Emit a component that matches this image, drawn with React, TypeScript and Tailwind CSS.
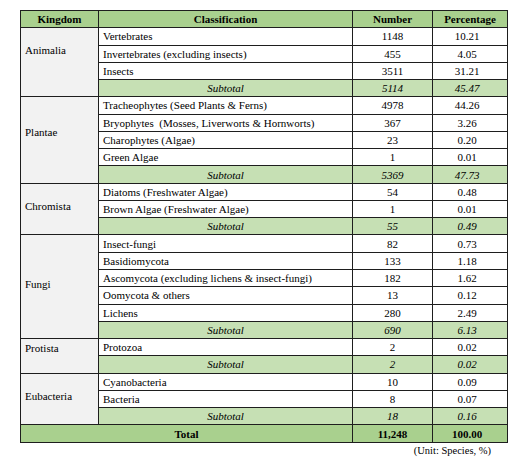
import React from 'react';

type Item = { name: string; number: string; percent: string };

type Kingdom = {
    name: string;
    // pushes the kingdom label down to where it sits in the original sheet
    labelPad: string;
    items: Item[];
    subtotal: { number: string; percent: string };
};

const kingdoms: Kingdom[] = [
    {
        name: 'Animalia',
        labelPad: 'pt-[14px]',
        items: [
            { name: 'Vertebrates', number: '1148', percent: '10.21' },
            { name: 'Invertebrates (excluding insects)', number: '455', percent: '4.05' },
            { name: 'Insects', number: '3511', percent: '31.21' },
        ],
        subtotal: { number: '5114', percent: '45.47' },
    },
    {
        name: 'Plantae',
        labelPad: 'pt-[27px]',
        items: [
            { name: 'Tracheophytes (Seed Plants & Ferns)', number: '4978', percent: '44.26' },
            { name: 'Bryophytes  (Mosses, Liverworts & Hornworts)', number: '367', percent: '3.26' },
            { name: 'Charophytes (Algae)', number: '23', percent: '0.20' },
            { name: 'Green Algae', number: '1', percent: '0.01' },
        ],
        subtotal: { number: '5369', percent: '47.73' },
    },
    {
        name: 'Chromista',
        labelPad: 'pt-[14px]',
        items: [
            { name: 'Diatoms (Freshwater Algae)', number: '54', percent: '0.48' },
            { name: 'Brown Algae (Freshwater Algae)', number: '1', percent: '0.01' },
        ],
        subtotal: { number: '55', percent: '0.49' },
    },
    {
        name: 'Fungi',
        labelPad: 'pt-[41px]',
        items: [
            { name: 'Insect-fungi', number: '82', percent: '0.73' },
            { name: 'Basidiomycota', number: '133', percent: '1.18' },
            { name: 'Ascomycota (excluding lichens & insect-fungi)', number: '182', percent: '1.62' },
            { name: 'Oomycota & others', number: '13', percent: '0.12' },
            { name: 'Lichens', number: '280', percent: '2.49' },
        ],
        subtotal: { number: '690', percent: '6.13' },
    },
    {
        name: 'Protista',
        labelPad: 'pt-[1px]',
        items: [{ name: 'Protozoa', number: '2', percent: '0.02' }],
        subtotal: { number: '2', percent: '0.02' },
    },
    {
        name: 'Eubacteria',
        labelPad: 'pt-[14px]',
        items: [
            { name: 'Cyanobacteria', number: '10', percent: '0.09' },
            { name: 'Bacteria', number: '8', percent: '0.07' },
        ],
        subtotal: { number: '18', percent: '0.16' },
    },
];

const cell = 'border border-[#1e1e1e] p-0 leading-[16px]';
const row = 'h-[17.27px]';

const App: React.FC = () => {
    return (
        <div className="w-[526px] h-[475px] bg-white pt-[10px] pl-[20px] text-[11px] text-black font-[liberation_serif]">
            <table className="border-collapse table-fixed w-[487px]">
                <colgroup>
                    <col className="w-[78px]" />
                    <col className="w-[254px]" />
                    <col className="w-[80px]" />
                    <col className="w-[75px]" />
                </colgroup>
                <thead>
                    <tr className={`${row} bg-[#a9d08e] font-bold`}>
                        <th className={`${cell} text-center`}>Kingdom</th>
                        <th className={`${cell} text-center`}>Classification</th>
                        <th className={`${cell} text-center`}>Number</th>
                        <th className={`${cell} text-center`}>Percentage</th>
                    </tr>
                </thead>
                <tbody>
                    {kingdoms.map((k) => (
                        <React.Fragment key={k.name}>
                            {k.items.map((item, i) => (
                                <tr key={item.name} className={row}>
                                    {i === 0 && (
                                        <td
                                            rowSpan={k.items.length + 1}
                                            className={`${cell} bg-[#f2f2f2] align-top pl-[4px] ${k.labelPad}`}
                                        >
                                            {k.name}
                                        </td>
                                    )}
                                    <td className={`${cell} pl-[4px] whitespace-pre`}>{item.name}</td>
                                    <td className={`${cell} text-center`}>{item.number}</td>
                                    <td className={`${cell} text-center pr-[6px]`}>{item.percent}</td>
                                </tr>
                            ))}
                            <tr className={`${row} bg-[#c6e0b4] italic`}>
                                <td className={`${cell} text-center`}>Subtotal</td>
                                <td className={`${cell} text-center`}>{k.subtotal.number}</td>
                                <td className={`${cell} text-center pr-[6px]`}>{k.subtotal.percent}</td>
                            </tr>
                        </React.Fragment>
                    ))}
                    {/* Grand total */}
                    <tr className={`${row} bg-[#a9d08e] font-bold`}>
                        <td colSpan={2} className={`${cell} text-center`}>Total</td>
                        <td className={`${cell} text-center`}>11,248</td>
                        <td className={`${cell} text-center pr-[6px]`}>100.00</td>
                    </tr>
                </tbody>
            </table>
            <p className="w-[471px] text-right text-[10.5px] mt-[1px] leading-[14px]">(Unit: Species, %)</p>
        </div>
    );
};

export default App;
